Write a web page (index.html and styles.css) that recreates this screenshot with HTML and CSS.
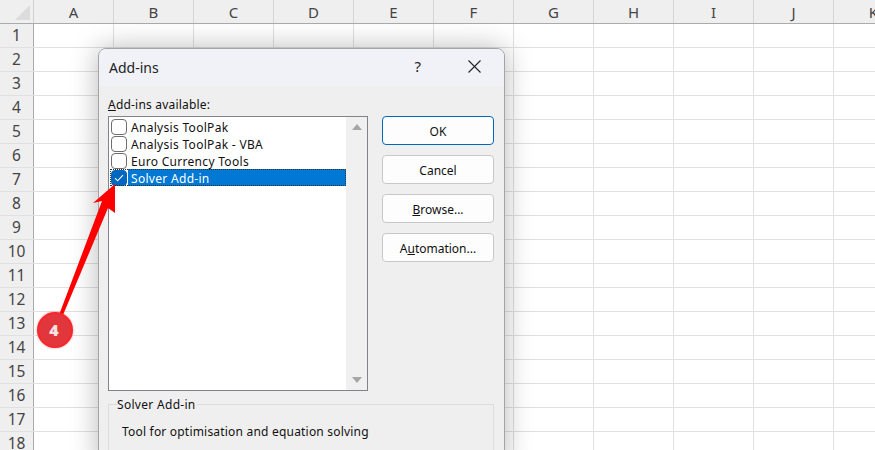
FILE: index.html
```html
<!DOCTYPE html>
<html lang="en">
<head>
    <meta charset="UTF-8">
    <title>Add-ins</title>
    <link rel="stylesheet" href="styles.css">
</head>
<body>
<div class="sheet">
    <div class="col-head">
        <div class="corner"><svg width="33" height="23" viewBox="0 0 33 23"><polygon points="30,5 30,20 15,20" fill="#dcdcdc"/></svg></div>
        <div class="col">A</div><div class="col">B</div><div class="col">C</div><div class="col">D</div><div class="col">E</div>
        <div class="col">F</div><div class="col">G</div><div class="col">H</div><div class="col">I</div><div class="col">J</div><div class="col">K</div>
    </div>
    <div class="row"><div class="num">1</div></div>
    <div class="row"><div class="num">2</div></div>
    <div class="row"><div class="num">3</div></div>
    <div class="row"><div class="num">4</div></div>
    <div class="row"><div class="num">5</div></div>
    <div class="row"><div class="num">6</div></div>
    <div class="row"><div class="num">7</div></div>
    <div class="row"><div class="num">8</div></div>
    <div class="row"><div class="num">9</div></div>
    <div class="row"><div class="num">10</div></div>
    <div class="row"><div class="num">11</div></div>
    <div class="row"><div class="num">12</div></div>
    <div class="row"><div class="num">13</div></div>
    <div class="row"><div class="num">14</div></div>
    <div class="row"><div class="num">15</div></div>
    <div class="row"><div class="num">16</div></div>
    <div class="row"><div class="num">17</div></div>
    <div class="row"><div class="num">18</div></div>
</div>

<div class="dialog">
    <div class="title-bar">
        <span class="title">Add-ins</span>
        <span class="help">?</span>
        <svg class="close" width="13" height="13" viewBox="0 0 13 13"><path d="M.5 .5 L12.5 12.5 M12.5 .5 L.5 12.5" stroke="#222" stroke-width="1.1" fill="none"/></svg>
    </div>
    <div class="dialog-body">
        <div class="left">
            <div class="list-label"><u>A</u>dd-ins available:</div>
            <div class="listbox">
                <div class="items">
                    <div class="item"><span class="check"></span><span class="item-text">Analysis ToolPak</span></div>
                    <div class="item"><span class="check"></span><span class="item-text">Analysis ToolPak - VBA</span></div>
                    <div class="item"><span class="check"></span><span class="item-text">Euro Currency Tools</span></div>
                    <div class="item selected">
                        <span class="check checked"><svg width="10" height="8" viewBox="0 0 10 8"><path d="M1 4.2 L3.6 6.8 L9 1.2" stroke="#fff" stroke-width="1.1" fill="none"/></svg></span>
                        <span class="item-text">Solver Add-in</span>
                    </div>
                </div>
                <div class="scrollbar">
                    <svg width="10" height="6" viewBox="0 0 10 6"><polygon points="5,0 10,6 0,6" fill="#a6a6a6"/></svg>
                    <svg width="10" height="6" viewBox="0 0 10 6"><polygon points="0,0 10,0 5,6" fill="#a6a6a6"/></svg>
                </div>
            </div>
        </div>
        <div class="buttons">
            <button class="btn default">OK</button>
            <button class="btn">Cancel</button>
            <button class="btn"><u>B</u>rowse...</button>
            <button class="btn">A<u>u</u>tomation...</button>
        </div>
    </div>
    <div class="group">
        <span class="group-label">Solver Add-in</span>
        <div class="group-text">Tool for optimisation and equation solving</div>
    </div>
</div>

<svg class="annotation" width="130" height="200" viewBox="0 0 130 200">
    <!-- arrow and numbered step, coordinates start at 0,170 of the page -->
    <polygon points="115,14 115,43 108,38 63,145 59,145 102,31 93,33" fill="#fe0000"/>
    <circle class="step-dot" cx="55" cy="160" r="17" fill="#e0363c" stroke="#f9262c" stroke-width="2"/>
    <text x="54" y="166" class="step">4</text>
</svg>
</body>
</html>
```

FILE: styles.css
```css
html, body { margin: 0; padding: 0; height: 100%; overflow: hidden; background: #fff; }
body { position: relative; font-family: "Noto Sans", "Open Sans", sans-serif; color: #111; }

.sheet { display: flex; flex-direction: column; width: 875px; }
.col-head { display: flex; height: 23px; background: #efefef; border-bottom: 1px solid #ababab; flex: none; }
.corner { width: 34px; flex: none; box-sizing: border-box; border-right: 1px solid #d0d0d0; }
.corner svg { display: block; }
.col { width: 80px; flex: none; box-sizing: border-box; border-right: 1px solid #d4d4d4; text-align: center; font-size: 15px; line-height: 24px; color: #444; }
.row { display: flex; height: 24px; flex: none; box-sizing: border-box; border-bottom: 1px solid #e0e0e0;
    background-image: repeating-linear-gradient(to right, transparent 0, transparent 79px, #e0e0e0 79px, #e0e0e0 80px);
    background-position: 34px 0; }
.num { width: 34px; flex: none; box-sizing: border-box; background: #efefef; border-right: 1px solid #ababab; text-align: center; font-size: 15.5px; line-height: 23px; color: #444; }

.dialog { position: absolute; left: 98px; top: 48px; width: 407px; height: 420px; box-sizing: border-box; background: #efefef; border: 1px solid #a4a4a4; border-radius: 8px; box-shadow: 0 0 28px rgba(0,0,0,.28); overflow: hidden; font-size: 12px; }
.title-bar { display: flex; align-items: center; height: 37px; background: #f0f2f8; padding: 0 23px 1px 10px; box-sizing: border-box; }
.title { flex: 1; font-size: 14px; color: #222; }
.help { font-size: 15px; margin: 0 47px 2px 0; color: #222; }
.close { display: block; margin-bottom: 1px; }
.dialog-body { display: flex; padding: 0 10px 0 9px; gap: 14px; }
.left { width: 260px; flex: none; }
.list-label { margin-top: 10px; height: 20px; line-height: 18px; letter-spacing: .2px; }
.listbox { display: flex; height: 275px; box-sizing: border-box; background: #fff; border: 1px solid #82828c; }
.items { flex: 1; padding: 1px 0 0 1px; }
.item { display: flex; align-items: center; height: 17px; }
.check { width: 16px; height: 16px; flex: none; box-sizing: border-box; margin: 0 1px 0 1px; background: #fff; border: 1px solid #6e6e6e; border-radius: 4px; display: flex; align-items: center; justify-content: center; }
.check.checked { background: #0067c0; border-color: #0067c0; }
.item-text { flex: 1; height: 17px; padding-left: 3px; line-height: 19px; letter-spacing: .3px; overflow: hidden; }
.selected { outline: 1px dotted #333; outline-offset: -1px; }
.selected .item-text { background: #0078d4; color: #fff; }
.scrollbar { width: 21px; flex: none; background: #f0f0f0; display: flex; flex-direction: column; align-items: center; justify-content: space-between; padding: 7px 0; box-sizing: border-box; }
.buttons { flex: 1; display: flex; flex-direction: column; gap: 10px; padding-top: 30px; }
.btn { height: 29px; padding: 2px 0 0; background: #fdfdfd; border: 1px solid #c8c8c8; border-radius: 4px; font: inherit; color: #111; }
.btn.default { border: 1px solid #0067c0; }
.group { position: relative; margin: 13px 10px 0 9px; height: 60px; box-sizing: border-box; border: 1px solid #dcdcdc; }
.group-label { position: absolute; left: 8px; top: -9px; padding-right: 1px; background: #efefef; line-height: 18px; letter-spacing: .3px; }
.group-text { padding: 18px 0 0 13px; line-height: 17px; letter-spacing: .2px; }

.annotation { position: absolute; left: 0; top: 170px; }
.step-dot { filter: drop-shadow(0 0 1px rgba(200,0,0,.4)); }
.step { font-family: "Open Sans", sans-serif; font-size: 16px; font-weight: 800; fill: #f4e3e3; text-anchor: middle; }
```
